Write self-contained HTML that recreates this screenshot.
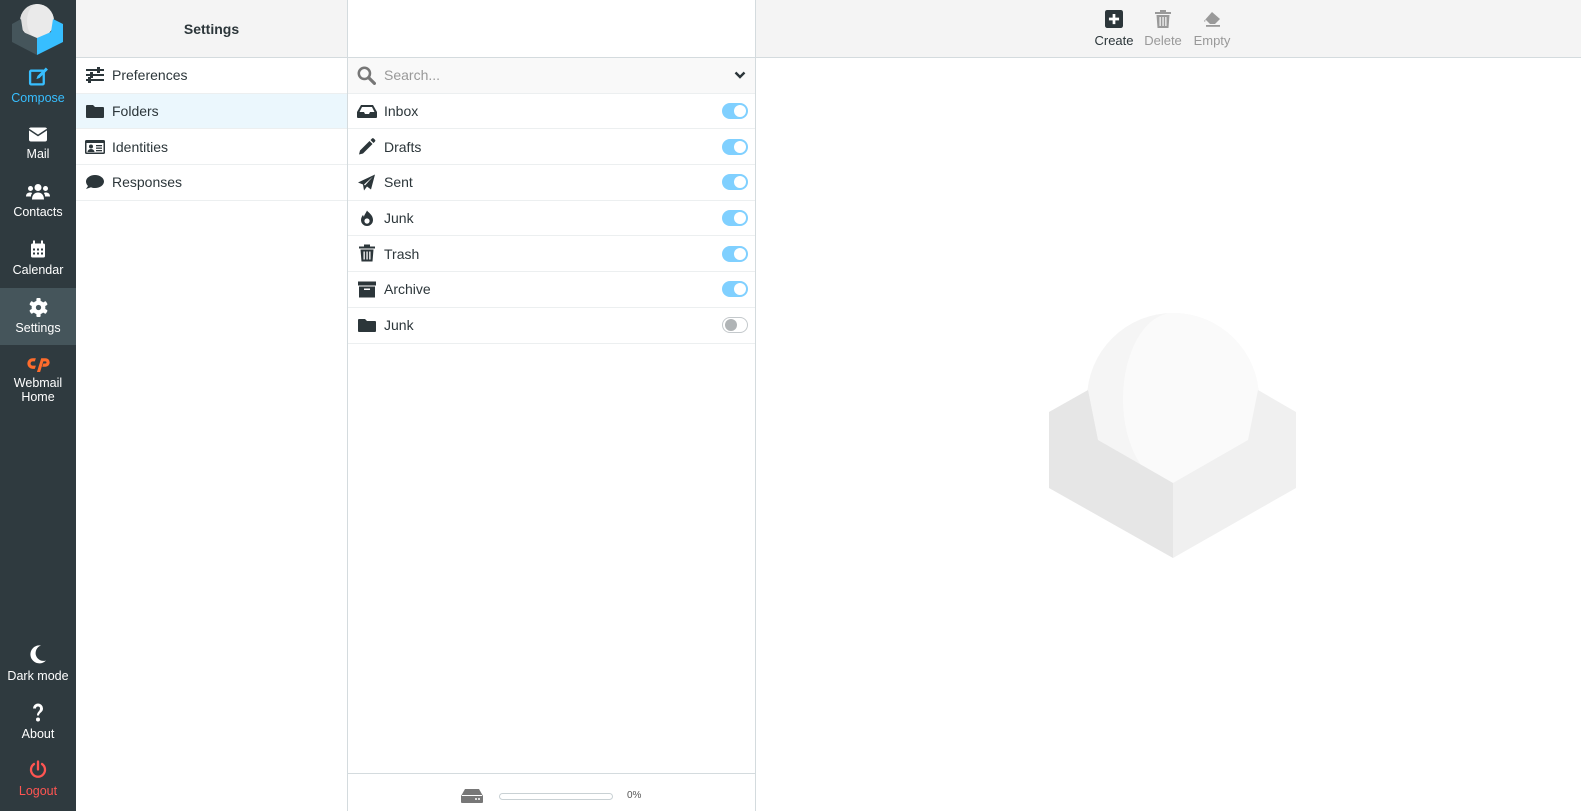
<!DOCTYPE html>
<html><head><meta charset="utf-8"><style>
*{box-sizing:border-box;margin:0;padding:0}
body{width:1581px;height:811px;overflow:hidden;font-family:"Liberation Sans",sans-serif;font-size:14px;color:#2c363a;background:#fff;position:relative}
#side{position:absolute;left:0;top:0;width:76px;height:811px;background:#2f3a3f}
.nav{position:absolute;left:0;width:76px;text-align:center;color:#fff;font-size:12.5px;line-height:14px}
.nav svg{display:block;margin:0 auto 4px}
#p1{position:absolute;left:76px;top:0;width:272px;height:811px;border-right:1px solid #d4dbde}
#p2{position:absolute;left:348px;top:0;width:408px;height:811px;border-right:1px solid #d4dbde}
.hd{height:58px;background:#f4f4f4;border-bottom:1px solid #d4dbde}
.row{height:35.7px;border-bottom:1px solid #eceff0;display:flex;align-items:center;position:relative}
.row svg{position:absolute;left:9px}
.row span{position:absolute;left:36px}
.tg{position:absolute;right:7px;width:26px;height:16px;border-radius:8px;background:#80d0ff}
.tg:after{content:"";position:absolute;right:2px;top:2px;width:12px;height:12px;border-radius:6px;background:#fff}
.tg.off{background:#fff;border:1px solid #c4c9cc}
.tg.off:after{left:2px;top:1px;background:#b0b4b6}
#tb{position:absolute;left:756px;top:0;width:825px;height:58px;background:#f4f4f4;border-bottom:1px solid #d4dbde}
.btn{position:absolute;top:10px;text-align:center;font-size:13px;width:50px}
.btn svg{display:block;margin:0 auto 5px}
</style></head><body>
<div id="side">
<svg style="position:absolute;left:0;top:0" width="76" height="58" viewBox="0 0 76 58">
<circle cx="37" cy="21" r="17" fill="#e0e0e0"/>
<path d="M37 4 A17 17 0 0 1 37 38 A10 17 0 0 1 37 4Z" fill="#eaeaea"/>
<polygon points="12,24 21,19 23,32 37,38 37,55 12,42" fill="#45555b"/>
<polygon points="37,38 51,32 53,19 63,24 63,42 37,55" fill="#37beff"/>
</svg>
<div class="nav" style="top:67px;color:#37beff"><svg width="21" height="20" viewBox="0 0 20 18"><rect x="2" y="3" width="13" height="13" rx="1" fill="none" stroke="#37beff" stroke-width="2.2"/><path d="M8 11l1-3 8-8 2 2-8 8z" fill="#37beff"/></svg>Compose</div>
<div class="nav" style="top:126px"><svg width="20" height="17" viewBox="0 0 20 16"><rect x="1" y="1" width="18" height="14" rx="2" fill="#fff"/><path d="M1 3l9 6 9-6" stroke="#2f3a3f" stroke-width="1.5" fill="none"/></svg>Mail</div>
<div class="nav" style="top:183px"><svg width="24" height="18" viewBox="0 0 24 17"><circle cx="12" cy="4" r="3.5" fill="#fff"/><circle cx="4.5" cy="5" r="2.5" fill="#fff"/><circle cx="19.5" cy="5" r="2.5" fill="#fff"/><path d="M6 16c0-5 3-7 6-7s6 2 6 7z M0 13c0-3 2-4 4-4 1 0 2 0 2 1-1 1-1 2-1 3z M24 13c0-3-2-4-4-4-1 0-2 0-2 1 1 1 1 2 1 3z" fill="#fff"/></svg>Contacts</div>
<div class="nav" style="top:240px"><svg width="18" height="19" viewBox="0 0 18 18"><rect x="2" y="3" width="14" height="14" rx="1.5" fill="#fff"/><rect x="4" y="0" width="2" height="4" fill="#fff"/><rect x="12" y="0" width="2" height="4" fill="#fff"/><g fill="#2f3a3f"><rect x="4" y="8" width="2" height="2"/><rect x="8" y="8" width="2" height="2"/><rect x="12" y="8" width="2" height="2"/><rect x="4" y="12" width="2" height="2"/><rect x="8" y="12" width="2" height="2"/><rect x="12" y="12" width="2" height="2"/></g></svg>Calendar</div>
<div style="position:absolute;left:0;top:288px;width:76px;height:57px;background:#45555b"></div>
<div class="nav" style="top:298px"><svg width="19" height="19" viewBox="0 0 18 18"><g fill="#fff" transform="translate(9 9)"><circle r="6.5"/><rect x="-2" y="-9" width="4" height="18" rx="1"/><rect x="-2" y="-9" width="4" height="18" rx="1" transform="rotate(60)"/><rect x="-2" y="-9" width="4" height="18" rx="1" transform="rotate(120)"/></g><circle cx="9" cy="9" r="2.5" fill="#45555b"/></svg>Settings</div>
<div class="nav" style="top:355px"><svg width="26" height="17" viewBox="0 0 24 16"><path d="M10 3H7a5 5 0 0 0 0 10h2l1-3H7a2 2 0 0 1 0-4h2z M11 16l4-13h4a4 4 0 0 1 0 8h-3l1-3h2a1 1 0 0 0 0-2h-2l-3 10z" fill="#ff6c2c"/></svg>Webmail<br>Home</div>
<div class="nav" style="top:644px"><svg width="18" height="21" viewBox="0 0 18 20"><path d="M12 1a9 9 0 1 0 5 15A7 7 0 0 1 12 1z" fill="#fff"/></svg>Dark mode</div>
<div class="nav" style="top:702px"><svg width="14" height="21" viewBox="0 0 14 20"><path d="M2 6a5 5 0 0 1 10 0c0 4-4 4-4 7H6c0-4 3-4 3-7a2 2 0 0 0-4 0z" fill="#fff"/><circle cx="7" cy="17" r="2" fill="#fff"/></svg>About</div>
<div class="nav" style="top:759px;color:#ff5552"><svg width="20" height="21" viewBox="0 0 20 20"><path d="M6 4.5a7 7 0 1 0 8 0" fill="none" stroke="#ff5552" stroke-width="2.3" stroke-linecap="round"/><path d="M10 2v8" stroke="#ff5552" stroke-width="2.3" stroke-linecap="round"/></svg>Logout</div>
</div>

<div id="p1">
<div class="hd" style="text-align:center;line-height:58px;font-weight:bold;font-size:14px">Settings</div>
<div class="row"><svg width="20" height="16" viewBox="0 0 20 16"><g fill="#2c363a"><rect x="1" y="2" width="18" height="2"/><rect x="1" y="7" width="18" height="2"/><rect x="1" y="12" width="18" height="2"/><rect x="12" y="0" width="3" height="6"/><rect x="5" y="5" width="3" height="6"/><rect x="3" y="10" width="3" height="6"/></g></svg><span>Preferences</span></div>
<div class="row" style="background:#ebf7fd"><svg width="20" height="16" viewBox="0 0 20 16"><path d="M1 3a1 1 0 0 1 1-1h6l2 2h8a1 1 0 0 1 1 1v9a1 1 0 0 1-1 1H2a1 1 0 0 1-1-1z" fill="#2c363a"/></svg><span>Folders</span></div>
<div class="row"><svg width="20" height="16" viewBox="0 0 20 16"><rect x="0" y="1" width="20" height="14" rx="1.5" fill="#2c363a"/><rect x="1.5" y="4" width="17" height="9.5" fill="#fff"/><circle cx="6" cy="7.5" r="2" fill="#2c363a"/><path d="M2.5 13a3.5 3 0 0 1 7 0z" fill="#2c363a"/><g fill="#2c363a"><rect x="11" y="6" width="6" height="1.3"/><rect x="11" y="8.5" width="6" height="1.3"/><rect x="11" y="11" width="6" height="1.3"/></g></svg><span>Identities</span></div>
<div class="row"><svg width="20" height="16" viewBox="0 0 20 16"><path d="M10 1c5 0 9 3 9 6.5S15 14 10 14c-1.5 0-3-.3-4-.8L1 15l2-3C2 11 1 9.5 1 7.5 1 4 5 1 10 1z" fill="#2c363a"/></svg><span>Responses</span></div>
</div>

<div id="p2">
<div class="hd" style="background:#fff"></div>
<div class="row" style="background:#f9f9f9"><svg width="19" height="19" viewBox="0 0 18 18"><circle cx="7" cy="7" r="5.3" fill="none" stroke="#777" stroke-width="2.4"/><path d="M11 11l5.5 5.5" stroke="#777" stroke-width="3" stroke-linecap="round"/></svg><span style="color:#999">Search...</span><svg style="left:auto;right:9px" width="12" height="10" viewBox="0 0 12 10"><path d="M1.5 2.5l4.5 4.5 4.5-4.5" fill="none" stroke="#2c363a" stroke-width="2.4"/></svg></div>
<div class="row"><svg width="20" height="16" viewBox="0 0 20 16"><path d="M4 2h12l4 7v5a1 1 0 0 1-1 1H1a1 1 0 0 1-1-1V9z" fill="#2c363a"/><path d="M5 4h10l2.5 5H13l-1 2H8L7 9H2.5z" fill="#fff"/></svg><span>Inbox</span><i class="tg"></i></div>
<div class="row"><svg width="20" height="19" viewBox="0 0 20 18"><path d="M12.5 3.5l3 3L6 16l-4 1 1-4z" fill="#2c363a"/><path d="M13.5 2.5l1.5-1.5a1.2 1.2 0 0 1 1.7 0l1.3 1.3a1.2 1.2 0 0 1 0 1.7L16.5 5.5z" fill="#2c363a"/></svg><span>Drafts</span><i class="tg"></i></div>
<div class="row"><svg width="20" height="19" viewBox="0 0 20 18"><path d="M18 1L1 9l5 2 1 6 3-4 4 3z M7 11l9-8-8 9z" fill="#2c363a"/></svg><span>Sent</span><i class="tg"></i></div>
<div class="row"><svg width="20" height="19" viewBox="0 0 20 18"><path d="M10 1c1 2 6 4 6 9.5a6 6 0 0 1-12 0c0-2 1-4 2-5l1 2c0-2 2-4 3-6.5z" fill="#2c363a"/><circle cx="10" cy="11.5" r="2.6" fill="#fff"/></svg><span>Junk</span><i class="tg"></i></div>
<div class="row"><svg width="20" height="19" viewBox="0 0 20 18"><rect x="2" y="2" width="16" height="2" fill="#2c363a"/><rect x="7" y="0" width="6" height="2" fill="#2c363a"/><path d="M3.5 5h13l-1 12h-11z" fill="#2c363a"/><g fill="#fff"><rect x="6.5" y="7" width="1.3" height="8"/><rect x="9.4" y="7" width="1.3" height="8"/><rect x="12.2" y="7" width="1.3" height="8"/></g></svg><span>Trash</span><i class="tg"></i></div>
<div class="row"><svg width="20" height="19" viewBox="0 0 20 18"><rect x="1" y="1" width="18" height="4" fill="#2c363a"/><rect x="2" y="6" width="16" height="11" fill="#2c363a"/><rect x="7" y="8" width="6" height="1.5" fill="#fff"/></svg><span>Archive</span><i class="tg"></i></div>
<div class="row"><svg width="20" height="16" viewBox="0 0 20 16"><path d="M1 3a1 1 0 0 1 1-1h6l2 2h8a1 1 0 0 1 1 1v9a1 1 0 0 1-1 1H2a1 1 0 0 1-1-1z" fill="#2c363a"/></svg><span>Junk</span><i class="tg off"></i></div>
<div style="position:absolute;left:0;bottom:0;width:407px;height:38px;border-top:1px solid #d4dbde">
<svg style="position:absolute;left:113px;top:15px" width="22" height="14" viewBox="0 0 22 14"><path d="M4 0h14l4 7v6a1 1 0 0 1-1 1H1a1 1 0 0 1-1-1V7z" fill="#777"/><rect x="1" y="6" width="20" height="1" fill="#fff"/><circle cx="15" cy="10" r="1" fill="#fff"/><circle cx="18" cy="10" r="1" fill="#fff"/></svg>
<div style="position:absolute;left:151px;top:19px;width:114px;height:7px;border:1px solid #c9d1d4;border-radius:4px"></div>
<div style="position:absolute;left:279px;top:16px;font-size:10px;color:#555">0%</div>
</div>
</div>

<div id="tb">
<div class="btn" style="left:333px;color:#2c363a"><svg width="18" height="18" viewBox="0 0 16 16"><rect width="16" height="16" rx="2" fill="#2c363a"/><path d="M8 3.5v9M3.5 8h9" stroke="#fff" stroke-width="2.4"/></svg>Create</div>
<div class="btn" style="left:382px;color:#999"><svg width="16" height="18" viewBox="0 0 16 18"><rect x="0" y="2" width="16" height="2" fill="#999"/><rect x="5" y="0" width="6" height="2" fill="#999"/><path d="M1.5 5h13l-1 13h-11z" fill="#999"/><g fill="#f4f4f4"><rect x="4.5" y="7" width="1.3" height="9"/><rect x="7.4" y="7" width="1.3" height="9"/><rect x="10.2" y="7" width="1.3" height="9"/></g></svg>Delete</div>
<div class="btn" style="left:431px;color:#999"><svg width="20" height="18" viewBox="0 0 20 16"><path d="M10 1l8 7-5 5H5L2 10z" fill="#999"/><path d="M3.5 8.5L9 14H5.5L3 11.5z" fill="#f4f4f4"/><rect x="4" y="14" width="14" height="1.8" fill="#999"/></svg>Empty</div>
</div>

<svg style="position:absolute;left:1040px;top:300px" width="270" height="270" viewBox="1040 300 270 270">
<circle cx="1173" cy="399" r="86" fill="#f5f5f5"/>
<path d="M1173 313 A86 86 0 0 1 1173 485 A50 86 0 0 1 1173 313Z" fill="#fafafa"/>
<polygon points="1049,412 1088,390 1098,440 1173,483 1173,558 1049,488" fill="#e6e6e6"/>
<polygon points="1173,483 1248,440 1258,390 1296,412 1296,488 1173,558" fill="#f0f0f0"/>
</svg>
</body></html>
